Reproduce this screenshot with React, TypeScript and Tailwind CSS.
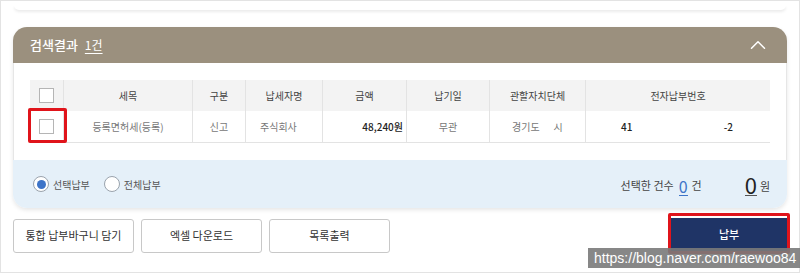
import { ChevronUp } from "lucide-react";

const cols = [
  { label: "세목", w: "w-[129px]" },
  { label: "구분", w: "w-[53px]" },
  { label: "납세자명", w: "w-[77px]" },
  { label: "금액", w: "w-[84px]" },
  { label: "납기일", w: "w-[83px]" },
  { label: "관할자치단체", w: "w-[96px]" },
  { label: "전자납부번호", w: "flex-1" },
];

function Box() {
  return <span className="block h-[15px] w-[15px] border border-[#b5b5b5] bg-white" />;
}

export default function App() {
  return (
    <div
      className="relative h-[277px] w-[800px] overflow-hidden bg-white text-[#333]"
      style={{ fontFamily: '"Noto Sans CJK KR", "Noto Sans", sans-serif' }}
    >
      <div className="h-[273px] border border-[#e3e3e3] px-3">
        <div className="mx-px mt-[4px] h-[5px] rounded-b-md shadow-[0_2px_3px_rgba(0,0,0,0.08)]" />

        <div className="mt-[17px] rounded-[14px] shadow-[0_2px_4px_rgba(0,0,0,0.1)]">
          <div className="flex h-[36px] items-center justify-between rounded-t-[14px] bg-[#9b907e] pl-[17px] pr-[16px] text-white">
            <div className="flex items-center gap-[7px] text-[13px]">
              <span className="font-medium">검색결과</span>
              <span className="text-[12px] underline underline-offset-[3px]">1건</span>
            </div>
            <ChevronUp className="h-[26px] w-[26px]" strokeWidth={1.4} />
          </div>

          <div className="border-x border-[#e6e6e6] bg-white px-[16px] pb-[17px] pt-[17px]">
            <div className="border-b border-[#e3e3e3] text-[10px]">
              <div className="flex h-[31px] bg-[#f3f3f3] text-[#444]">
                <div className="flex w-[34px] items-center justify-center border-r border-[#e3e3e3]">
                  <Box />
                </div>
                {cols.map((c, i) => (
                  <div
                    key={c.label}
                    className={`${c.w} flex items-center justify-center ${i < cols.length - 1 ? "border-r border-[#e3e3e3]" : ""}`}
                  >
                    {c.label}
                  </div>
                ))}
              </div>
              <div className="flex h-[31px] text-[#777]">
                <div className="relative flex w-[34px] items-center justify-center border-r border-[#e3e3e3]">
                  <Box />
                  <span className="absolute left-[-2px] top-[-3px] h-[35px] w-[39px] rounded-[2px] border-[3px] border-[#e0141b]" />
                </div>
                <div className="flex w-[129px] items-center justify-center border-r border-[#e3e3e3]">등록면허세(등록)</div>
                <div className="flex w-[53px] items-center justify-center border-r border-[#e3e3e3]">신고</div>
                <div className="flex w-[77px] items-center border-r border-[#e3e3e3] pl-[14px]">주식회사</div>
                <div className="flex w-[84px] items-center justify-end border-r border-[#e3e3e3] pr-[3px] font-medium text-[#222]">48,240원</div>
                <div className="flex w-[83px] items-center justify-center border-r border-[#e3e3e3]">무관</div>
                <div className="flex w-[96px] items-center gap-[14px] border-r border-[#e3e3e3] pl-[22px]">
                  <span>경기도</span>
                  <span>시</span>
                </div>
                <div className="flex flex-1 items-center justify-between pl-[35px] pr-[37px] font-medium text-[#222]">
                  <span>41</span>
                  <span>-2</span>
                </div>
              </div>
            </div>
          </div>

          <div className="flex h-[48px] items-center justify-between rounded-b-[14px] bg-[#e5f0f9] pl-[20px] pr-[17px] text-[10px] text-[#555]">
            <div className="flex items-center">
              <span className="flex h-[16px] w-[16px] items-center justify-center rounded-full border border-[#9aa3ad] bg-white">
                <span className="h-[9px] w-[9px] rounded-full bg-[#3d74c8]" />
              </span>
              <span className="ml-[4px]">선택납부</span>
              <span className="ml-[14px] h-[16px] w-[16px] rounded-full border border-[#9aa3ad] bg-white" />
              <span className="ml-[4px]">전체납부</span>
            </div>
            <div className="flex items-end">
              <span className="mb-[2px] text-[11px] text-[#444]">선택한 건수</span>
              <span className="ml-[5px] border-b border-[#3d74c8] text-[16px] leading-[18px] text-[#3d74c8]">0</span>
              <span className="mb-[2px] ml-[4px] text-[11px] text-[#444]">건</span>
              <span className="ml-[43px] border-b border-[#555] text-[22px] leading-[22px] text-[#222]">0</span>
              <span className="mb-[1px] ml-[3px] text-[11px] text-[#444]">원</span>
            </div>
          </div>
        </div>

        <div className="mt-[9px] flex items-center justify-between">
          <div className="flex gap-[7px]">
            {["통합 납부바구니 담기", "엑셀 다운로드", "목록출력"].map((t) => (
              <button
                key={t}
                type="button"
                className="flex h-[34px] w-[121px] items-center justify-center rounded-[3px] border border-[#c8c8c8] bg-white text-[11px] text-[#333]"
              >
                {t}
              </button>
            ))}
          </div>
          <div className="mr-[-3px] mt-[-4px] rounded-[2px] border-[3px] border-[#e0141b] bg-white pt-[2px]">
            <button
              type="button"
              className="flex h-[33px] w-[116px] items-center justify-center bg-[#1f3466] text-[11px] font-medium text-white"
            >
              납부
            </button>
          </div>
        </div>
      </div>

      <div
        className="absolute left-[588px] top-[248px] bg-[#7a7a7a]/90 px-[6px] text-[14px] leading-[20px] text-white"
        style={{ fontFamily: '"Liberation Sans", Arial, sans-serif' }}
      >
        https://blog.naver.com/raewoo84
      </div>
    </div>
  );
}
